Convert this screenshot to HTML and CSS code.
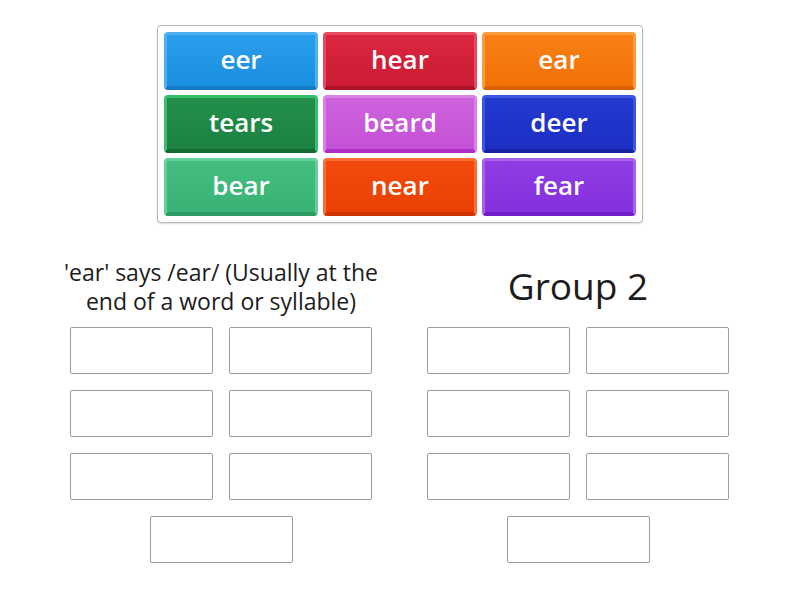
FILE: index.html
```html
<!DOCTYPE html>
<html>
<head>
<meta charset="utf-8">
<link rel="stylesheet" href="styles.css">
</head>
<body>
<div class="bank">
  <div class="tile t-blue">eer</div>
  <div class="tile t-red">hear</div>
  <div class="tile t-orange">ear</div>
  <div class="tile t-green">tears</div>
  <div class="tile t-pink">beard</div>
  <div class="tile t-navy">deer</div>
  <div class="tile t-mint">bear</div>
  <div class="tile t-scarlet">near</div>
  <div class="tile t-purple">fear</div>
</div>
<div class="groups">
  <div class="group">
    <div class="heading small">'ear' says /ear/ (Usually at the end of a word or syllable)</div>
    <div class="slots">
      <div class="slot"></div><div class="slot"></div>
      <div class="slot"></div><div class="slot"></div>
      <div class="slot"></div><div class="slot"></div>
      <div class="slot last"></div>
    </div>
  </div>
  <div class="group">
    <div class="heading large">Group 2</div>
    <div class="slots">
      <div class="slot"></div><div class="slot"></div>
      <div class="slot"></div><div class="slot"></div>
      <div class="slot"></div><div class="slot"></div>
      <div class="slot last"></div>
    </div>
  </div>
</div>
</body>
</html>
```
FILE: styles.css
```css
html, body {
  margin: 0;
  padding: 0;
  background: #ffffff;
}
body {
  font-family: "Open Sans", "Lato", sans-serif;
  color: #1c1c1c;
}
.bank {
  width: 472px;
  margin: 25px auto 0;
  padding: 6px;
  border: 1px solid #b9b9b9;
  border-radius: 4px;
  box-shadow: 0 1px 2px rgba(0,0,0,0.15);
  display: grid;
  grid-template-columns: repeat(3, 154px);
  grid-auto-rows: 58px;
  gap: 5px;
}
.tile {
  box-sizing: border-box;
  border-radius: 4px;
  border: 3px solid var(--light);
  border-bottom: 4px solid var(--dark);
  background: linear-gradient(to bottom, var(--face), var(--face2));
  color: #ffffff;
  font-size: 26px;
  font-weight: 600;
  display: flex;
  align-items: center;
  justify-content: center;
  padding-bottom: 4px;
}
.t-blue    { --light: #4cb0f2; --face: #2a9deb; --face2: #1b8fe0; --dark: #1679c8; }
.t-red     { --light: #e54a5e; --face: #db2640; --face2: #cc1b33; --dark: #ad1228; }
.t-orange  { --light: #fb9b40; --face: #f88015; --face2: #f27207; --dark: #d96100; }
.t-green   { --light: #36c06c; --face: #238f4b; --face2: #1c8242; --dark: #156a34; }
.t-pink    { --light: #d883e4; --face: #cd62dc; --face2: #c452d6; --dark: #ae2ec6; }
.t-navy    { --light: #3e55df; --face: #2239cf; --face2: #1c2fc4; --dark: #1624a2; }
.t-mint    { --light: #62d098; --face: #43bd80; --face2: #38b275; --dark: #2a9c63; }
.t-scarlet { --light: #f96e36; --face: #f24a0d; --face2: #ea4004; --dark: #cc3400; }
.t-purple  { --light: #a562ec; --face: #8f3ce4; --face2: #8530de; --dark: #6f1ec8; }

.groups {
  display: flex;
  justify-content: center;
  gap: 55px;
  margin-top: 32px;
  padding-right: 1px;
}
.group {
  width: 302px;
  display: flex;
  flex-direction: column;
  align-items: center;
}
.heading {
  box-sizing: border-box;
  width: 340px;
  height: 64px;
  display: flex;
  align-items: center;
  justify-content: center;
  text-align: center;
  margin-bottom: 8px;
  color: #1c1c1c;
}
.heading.small {
  font-size: 23px;
  line-height: 29px;
}
.heading.large {
  font-size: 37px;
  padding-bottom: 4px;
}
.slots {
  display: grid;
  grid-template-columns: repeat(2, 143px);
  grid-auto-rows: 47px;
  column-gap: 16px;
  row-gap: 16px;
}
.slot {
  box-sizing: border-box;
  border: 1px solid #9e9e9e;
  border-radius: 2px;
  background: #ffffff;
  box-shadow: 0 0 1px rgba(0,0,0,0.1);
}
.slot.last {
  grid-column: 1 / span 2;
  justify-self: center;
  width: 143px;
}
```
